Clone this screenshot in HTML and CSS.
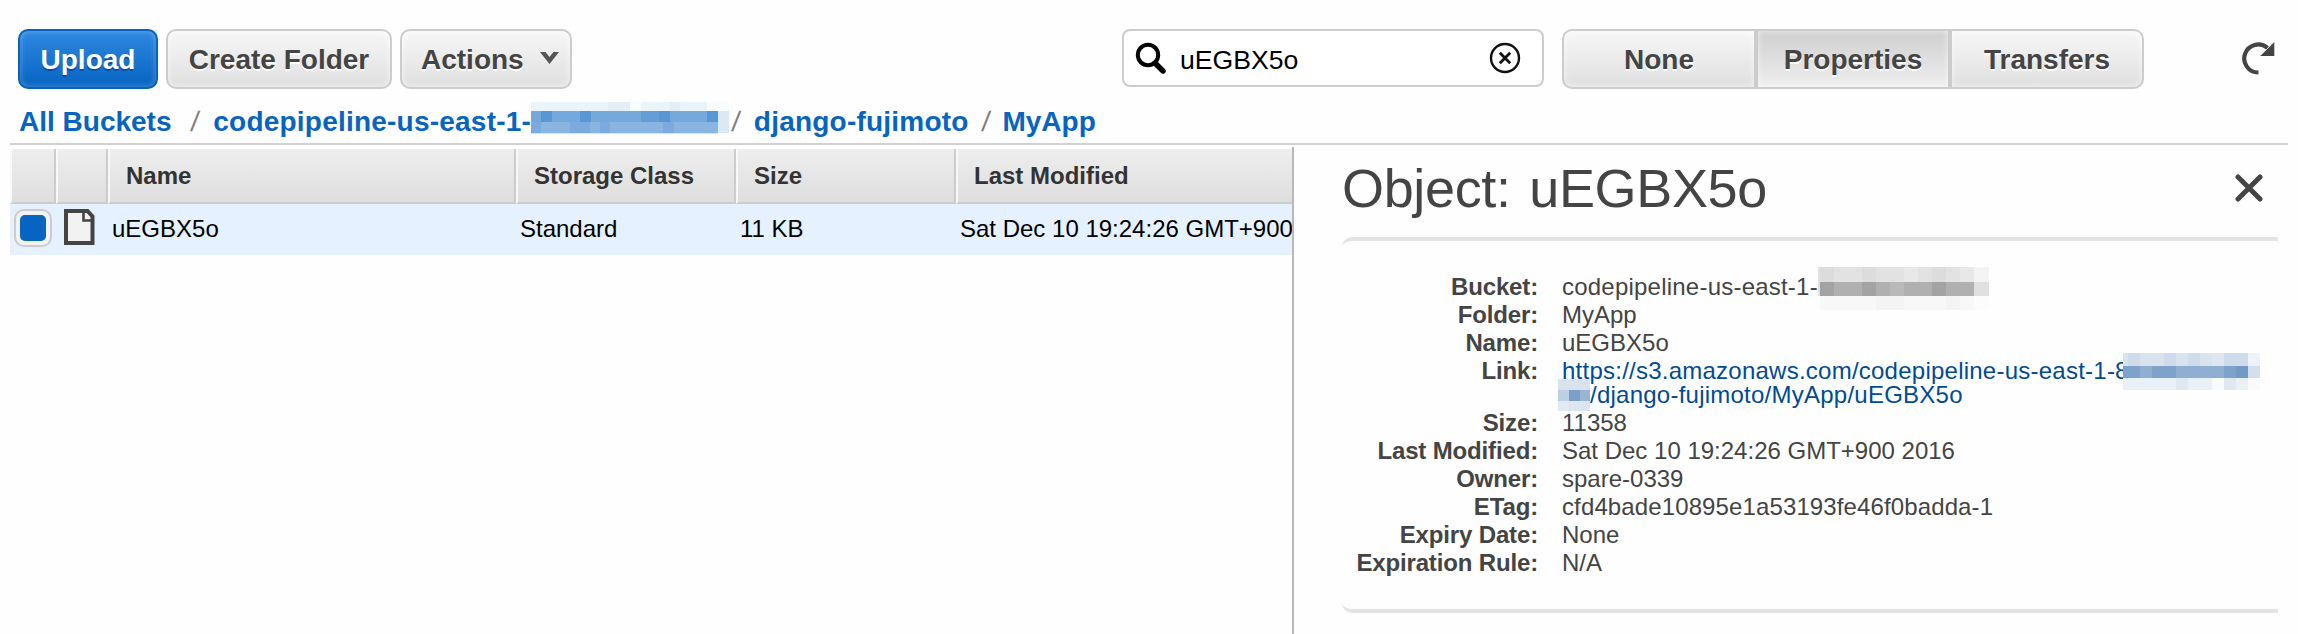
FILE: index.html
```html
<!DOCTYPE html>
<html lang="en">
<head>
<meta charset="utf-8">
<title>S3 Management Console</title>
<link rel="stylesheet" href="styles.css">
</head>
<body>
<div class="toolbar">
  <button class="btn primary">Upload</button>
  <button class="btn create">Create Folder</button>
  <button class="btn actions">Actions
    <svg class="caret" width="19" height="12" viewBox="0 0 19 12"><path d="M0 0h5.500l4 5 4-5H19l-9.500 12z" fill="#555"/></svg>
  </button>
  <div class="search">
    <svg width="32" height="32" viewBox="0 0 32 32" fill="none" stroke="#000"><circle cx="13" cy="13" r="10.2" stroke-width="4"/><path d="M20 21l8 8" stroke-width="5.4" stroke-linecap="round"/></svg>
    <span class="query">uEGBX5o</span>
    <svg width="32" height="32" viewBox="0 0 32 32" fill="none" stroke="#111"><circle cx="16" cy="16" r="14" stroke-width="2.4"/><path d="M10.8 10.8l10.4 10.4M21.2 10.8L10.8 21.2" stroke-width="2.8"/></svg>
  </div>
  <div class="segments">
    <button class="seg">None</button>
    <button class="seg active">Properties</button>
    <button class="seg">Transfers</button>
  </div>
  <svg class="refresh" width="33" height="33" viewBox="0 0 33 33"><path d="M16.500 30.500A14 14 0 1 1 25.500 6" fill="none" stroke="#444" stroke-width="4.200"/><path d="M32.300 0v14h-14z" fill="#444"/></svg>
</div>
<nav class="crumbs">
  <a>All Buckets</a><i class="s1">/</i><a class="wide">codepipeline-us-east-1-</a><svg class="mask mask-crumb" width="198" height="32" viewBox="0 0 198 32" shape-rendering="crispEdges">
    <path fill="#ecf4fb" d="M0 0h99v9H0zM110 0h66v9h-66z"/><path fill="#e3eef7" d="M77 0h22v9H77zM139 0h10v9h-10z"/><path fill="#f8fcff" d="M99 0h11v9H99zM176 0h22v9h-22z"/>
    <path fill="#75a9dc" d="M0 9h187v11H0z"/><path fill="#5996d5" d="M10 9h11v11H10zM49 9h11v11H49zM128 9h11v11h-11zM176 9h11v11h-11z"/><path fill="#659dd8" d="M110 9h18v11h-18z"/>
    <path fill="#8ab5e1" d="M0 20h187v11H0z"/><path fill="#7baade" d="M0 20h10v11H0zM39 20h20v11H39zM69 20h10v11H69zM132 20h11v11h-11z"/><path fill="#dbe8f6" d="M187 9h11v22h-11z"/><path fill="#d3e4f5" d="M0 31h187v1H0z"/>
  </svg><i class="s2">/</i><a class="wide">django-fujimoto</a><i class="s3">/</i><a>MyApp</a>
</nav>
<main class="content">
  <section class="list">
    <div class="row head"><div></div><div></div><div>Name</div><div>Storage Class</div><div>Size</div><div>Last Modified</div></div>
    <div class="row item">
      <div class="pick"><span class="check"></span></div>
      <div class="file"><svg width="31" height="36" viewBox="0 0 31 36"><path d="M2 2h21.500l5 5.500V34H2z" fill="#f2f2f2" stroke="#444" stroke-width="4"/><path d="M19.500 2v9.500h9" fill="none" stroke="#444" stroke-width="2.600"/></svg></div>
      <div>uEGBX5o</div><div>Standard</div><div>11 KB</div><div>Sat Dec 10 19:24:26 GMT+900</div>
    </div>
  </section>
  <section class="detail">
    <header><h1>Object: uEGBX5o</h1>
      <svg width="28" height="28" viewBox="0 0 28 28"><path d="M3 3l22 22M25 3L3 25" stroke="#444" stroke-width="5" stroke-linecap="round"/></svg>
    </header>
    <dl>
      <dt>Bucket:</dt><dd><span class="wide">codepipeline-us-east-1-</span><svg class="mask mask-gray" width="171" height="43" viewBox="0 0 171 43" shape-rendering="crispEdges">
        <path fill="#e2e2e2" d="M0 0h156v15H0z"/><path fill="#dcdcdc" d="M2 0h14v15H2zM44 0h14v15H44zM114 0h14v15h-14z"/><path fill="#e8e8e8" d="M86 0h14v15H86zM142 0h14v15h-14z"/><path fill="#f4f4f4" d="M156 0h15v15h-15z"/>
        <path fill="#b0b0b0" d="M2 15h154v14H2z"/><path fill="#a3a3a3" d="M2 15h14v14H2zM44 15h14v14H44zM114 15h14v14h-14z"/><path fill="#b9b9b9" d="M72 15h14v14H72z"/><path fill="#e0e0e0" d="M0 15h2v14H0zM156 15h15v14h-15z"/>
        <path fill="#f8f8f8" d="M2 29h154v14H2z"/><path fill="#f4f4f4" d="M58 29h28v14H58zM128 29h14v14h-14z"/><path fill="#fcfcfc" d="M156 29h15v14h-15z"/>
      </svg></dd>
      <dt>Folder:</dt><dd>MyApp</dd>
      <dt>Name:</dt><dd>uEGBX5o</dd>
      <dt>Link:</dt><dd class="link"><div>https://s3.amazonaws.com/codepipeline-us-east-1-8<svg class="mask mask-link" width="137" height="37" viewBox="0 0 137 37" shape-rendering="crispEdges">
        <path fill="#d9e3ee" d="M0 0h125v13H0z"/><path fill="#cddbea" d="M5 0h12v13H5zM41 0h12v13H41zM65 0h12v13H65zM101 0h24v13h-24z"/><path fill="#e0e6f0" d="M89 0h12v13H89z"/><path fill="#eef3f9" d="M125 0h12v13h-12z"/>
        <path fill="#90aed1" d="M0 13h125v12H0z"/><path fill="#7fa2ca" d="M0 13h17v12H0zM29 13h24v12H29zM101 13h12v12h-12z"/><path fill="#7399c5" d="M113 13h12v12h-12z"/><path fill="#d3dfee" d="M125 13h12v12h-12z"/>
        <path fill="#eaf0f7" d="M0 25h125v12H0z"/><path fill="#dfe7f1" d="M53 25h12v12H53zM101 25h12v12h-12z"/><path fill="#f8fafc" d="M89 25h12v12H89zM125 25h12v12h-12z"/>
      </svg></div><div><svg class="mask mask-tail" width="32" height="32" viewBox="0 0 32 32" shape-rendering="crispEdges">
        <path fill="#d9e3ee" d="M0 0h32v11H0z"/><path fill="#bdcfe4" d="M0 11h11v11H0z"/><path fill="#7a9fc9" d="M11 11h11v11H11z"/><path fill="#9ab4d4" d="M22 11h10v11H22z"/><path fill="#e3e9f4" d="M0 22h11v10H0z"/><path fill="#dce5f0" d="M11 22h21v10H11z"/>
      </svg>/django-fujimoto/MyApp/uEGBX5o</div></dd>
      <dt>Size:</dt><dd>11358</dd>
      <dt>Last Modified:</dt><dd>Sat Dec 10 19:24:26 GMT+900 2016</dd>
      <dt>Owner:</dt><dd>spare-0339</dd>
      <dt>ETag:</dt><dd class="etag">cfd4bade10895e1a53193fe46f0badda-1</dd>
      <dt>Expiry Date:</dt><dd>None</dd>
      <dt>Expiration Rule:</dt><dd>N/A</dd>
    </dl>
  </section>
</main>
</body>
</html>
```
FILE: styles.css
```css
* { box-sizing: border-box; }
body {
  margin: 0;
  height: 634px;
  overflow: hidden;
  display: flex;
  flex-direction: column;
  background: #fefefe;
  color: #444;
  font: 24px/28px "Liberation Sans", Arial, sans-serif;
}
svg { display: block; flex: none; }
.toolbar { display: flex; padding: 29px 0 0 18px; height: 99px; flex: none; }
.btn, .seg {
  height: 60px;
  padding: 1px 0 0;
  border: 2px solid #ccc;
  background: linear-gradient(#f7f7f7, #dfdfdf);
  box-shadow: inset 0 0 6px rgba(255, 255, 255, .7);
  color: #444;
  font: bold 28px/55px "Liberation Sans", Arial, sans-serif;
  text-shadow: 0 2px 0 #fff;
}
.btn { border-radius: 10px; margin-right: 8px; }
.primary {
  width: 140px;
  border-color: #0a61bd;
  background: linear-gradient(#2e88e0, #0764c2);
  box-shadow: inset 0 0 6px rgba(255, 255, 255, .3);
  color: #fff;
  text-shadow: 0 2px 0 #0a50a0;
}
.create { width: 226px; }
.actions { width: 172px; display: flex; padding-left: 19px; margin: 0; }
.caret { margin: 20px 0 0 16px; }
.search {
  width: 422px;
  height: 58px;
  margin-left: 550px;
  padding: 0 21px 0 11px;
  display: flex;
  align-items: center;
  border: 2px solid #ccc;
  border-radius: 8px;
  background: #fff;
  color: #000;
}
.query { flex: 1; padding: 3px 0 0 13px; font-size: 26.600px; }
.segments { display: flex; margin-left: 18px; }
.seg { width: 192px; }
.seg:first-child { border-radius: 10px 0 0 10px; border-right: 0; }
.seg:last-child { border-radius: 0 10px 10px 0; border-left: 0; }
.active { width: 198px; border-left-width: 4px; border-right-width: 4px; background: linear-gradient(#cfcfcf, #eee); }
.refresh { margin: 13px 0 0 98px; }
.crumbs {
  display: flex;
  height: 46px;
  flex: none;
  margin: 0 10px;
  padding: 4px 0 0 9px;
  border-bottom: 2px solid #d1d1d1;
  color: #0764c2;
  font: bold 28px/38px "Liberation Sans", Arial, sans-serif;
}
.crumbs i { font-style: normal; font-weight: normal; color: #808080; transform: skewX(-7deg); }
.wide { letter-spacing: .22px; }
.mask-crumb { margin-top: -1px; }
.s1 { margin: 0 15px 0 19px; }
.s2 { margin: 0 14px 0 3px; }
.s3 { margin: 0 13px; }
.content { display: flex; flex: 1; padding-top: 2px; min-height: 0; }
.list { width: 1294px; flex: none; padding-left: 10px; border-right: 2px solid #b8b8b8; overflow: hidden; }
.row { display: grid; grid-template-columns: 46px 52px 408px 220px 220px 336px; }
.head { height: 56px; color: #333; font-weight: bold; line-height: 53px; }
.head div {
  margin-top: 2px;
  padding-left: 16px;
  background: linear-gradient(#eee, #dedede);
  border-right: 2px solid #ccc;
  border-bottom: 2px solid #ccc;
  border-left: 2px solid #f8f8f8;
}
.head div:last-child { border-right: 0; }
.item { height: 52px; background: #e5f1fe; color: #000; line-height: 52px; white-space: nowrap; }
.item div { padding-left: 4px; }
.item .pick { padding: 6px 0 0 4px; }
.item .file { padding: 6px 0 0 8px; }
.check {
  display: block;
  width: 38px;
  height: 38px;
  padding: 4px;
  border: 2px solid #ccc;
  border-radius: 10px;
  background: #f2f2f2;
}
.check::before { content: ""; display: block; width: 26px; height: 26px; border-radius: 5px; background: #0764c2; }
.detail { flex: 1; padding: 0 20px 0 48px; }
.detail header { display: flex; justify-content: space-between; align-items: center; height: 90px; padding: 0 15px 8px 0; }
h1 { margin: 0; font-size: 54px; font-weight: normal; line-height: 60px; letter-spacing: -.35px; word-spacing: 4px; }
dl {
  margin: 0;
  height: 376px;
  padding-top: 32px;
  border: solid #e3e3e3;
  border-width: 4px 0;
  border-radius: 10px 0 0 10px;
  display: grid;
  grid-template-columns: 196px 1fr;
  column-gap: 24px;
  align-content: start;
}
dt { font-weight: bold; text-align: right; letter-spacing: -.15px; }
dd { margin: 0; display: flex; height: 28px; }
.etag { letter-spacing: .12px; }
.link { display: block; height: 52px; color: #004b96; letter-spacing: .24px; }
.link div { display: flex; height: 24px; }
.mask-gray { margin-top: -6px; }
.mask-link { margin: -4px 0 0 -6px; }
.mask-tail { margin: -2px 0 0 -4px; }
```
